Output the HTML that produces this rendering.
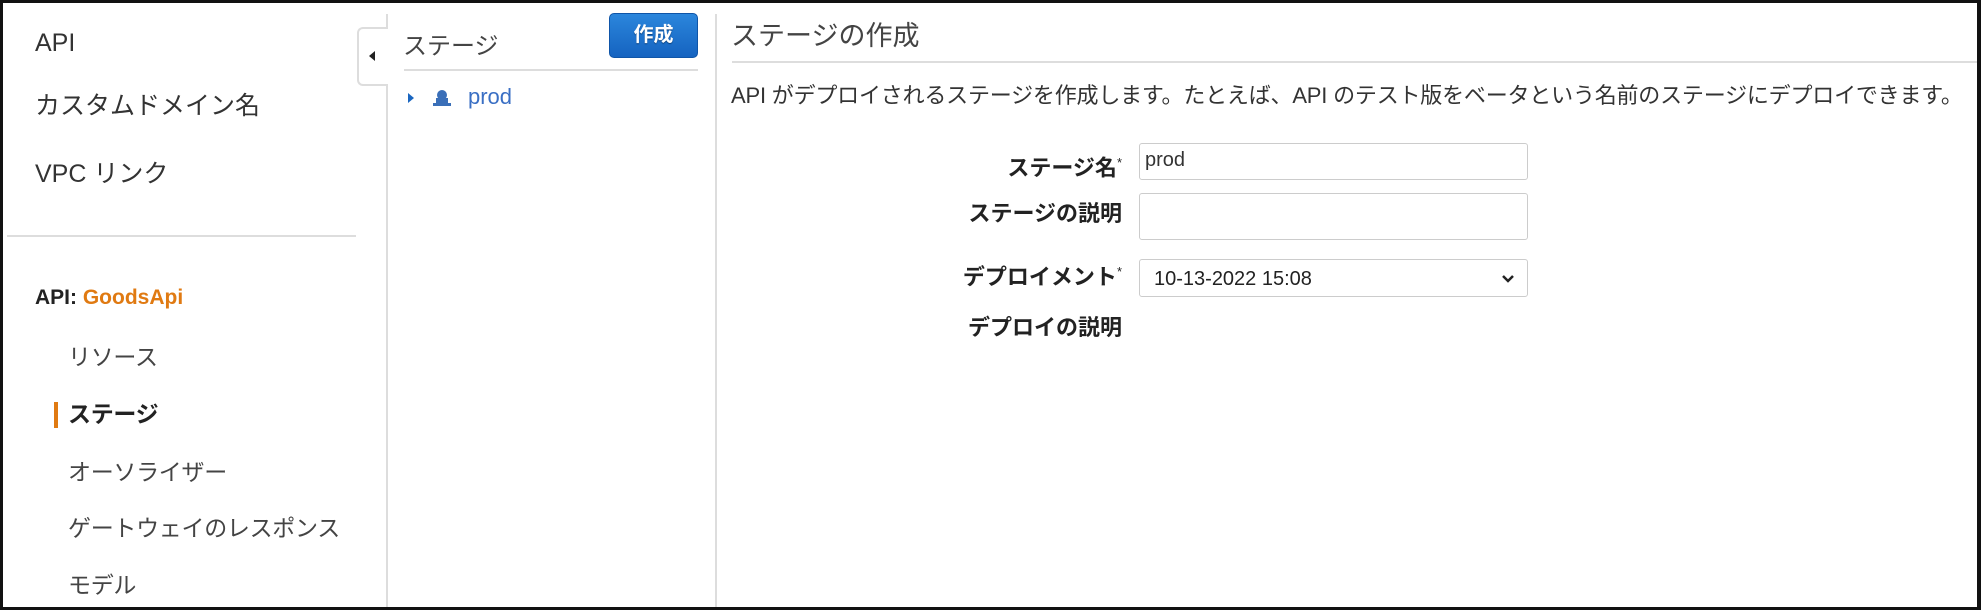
<!DOCTYPE html>
<html><head><meta charset="utf-8"><style>
*{margin:0;padding:0;box-sizing:border-box}
body{width:1981px;height:610px;overflow:hidden;background:#fff;font-family:"Liberation Sans","Noto Sans CJK JP",sans-serif;color:#333;position:relative}
.frame{position:absolute;left:0;top:0;width:1981px;height:610px;border:3px solid #111;border-right-width:4px}
.a{position:absolute;white-space:nowrap}
.l{font-size:25px;color:#333;left:35px;line-height:30px}
.s{font-size:23px;color:#444;left:68px;line-height:28px;letter-spacing:-0.3px}
.lab{font-size:22px;font-weight:bold;color:#222;right:859px;line-height:26px}
.inp{position:absolute;left:1139px;width:389px;border:1px solid #ccc;border-radius:3px;background:#fff}
</style></head><body>
<div class="a l" style="top:28px">API</div>
<div class="a l" style="top:91px">カスタムドメイン名</div>
<div class="a l" style="top:159px">VPC リンク</div>
<div class="a" style="left:7px;top:235px;width:349px;height:2px;background:#ddd"></div>
<div class="a" style="left:35px;top:286px;font-size:21px;font-weight:bold;color:#222">API: <span style="color:#e07a12">GoodsApi</span></div>
<div class="a s" style="top:343px">リソース</div>
<div class="a" style="left:54px;top:402px;width:4px;height:26px;background:#e07a12"></div>
<div class="a s" style="top:400px;font-weight:bold;color:#222">ステージ</div>
<div class="a s" style="top:458px">オーソライザー</div>
<div class="a s" style="top:514px">ゲートウェイのレスポンス</div>
<div class="a s" style="top:571px">モデル</div>
<div class="a" style="left:386px;top:14px;width:2px;height:596px;background:#ddd"></div>
<div class="a" style="left:357px;top:27px;width:31px;height:59px;border:2px solid #ddd;border-right:none;border-radius:6px 0 0 6px;background:#fff"></div>
<div class="a" style="left:369px;top:51px;width:0;height:0;border-top:5px solid transparent;border-bottom:5px solid transparent;border-right:6px solid #222"></div>
<div class="a" style="left:403px;top:26px;font-size:24px;color:#444">ステージ</div>
<div class="a" style="left:609px;top:13px;width:89px;height:45px;border-radius:5px;background:linear-gradient(#2b86dc,#1563c0);border:1px solid #0f55a8;color:#fff;font-weight:bold;font-size:20px;text-align:center;line-height:43px;text-shadow:0 1px 1px #0b3f7a">作成</div>
<div class="a" style="left:404px;top:69px;width:294px;height:2px;background:#ddd"></div>
<div class="a" style="left:408px;top:93px;width:0;height:0;border-top:5px solid transparent;border-bottom:5px solid transparent;border-left:6px solid #1a66c0"></div>
<svg class="a" style="left:432px;top:89px" width="20" height="18" viewBox="0 0 20 18"><circle cx="10" cy="6" r="5" fill="#3a6fb8"/><rect x="4" y="9" width="12" height="5" fill="#3a6fb8"/><rect x="1" y="14" width="18" height="3" fill="#3a6fb8"/></svg>
<div class="a" style="left:468px;top:84px;font-size:22px;color:#3a6fc4">prod</div>
<div class="a" style="left:715px;top:14px;width:2px;height:596px;background:#ddd"></div>
<div class="a" style="left:731px;top:14px;font-size:27px;color:#444">ステージの作成</div>
<div class="a" style="left:732px;top:61px;width:1245px;height:2px;background:#ddd"></div>
<div class="a" style="left:731px;top:78px;font-size:22px;color:#333;letter-spacing:-0.2px">API がデプロイされるステージを作成します。たとえば、API のテスト版をベータという名前のステージにデプロイできます。</div>
<div class="a lab" style="top:150px">ステージ名<sup style="font-size:13px;font-weight:normal">*</sup></div>
<div class="a lab" style="top:201px">ステージの説明</div>
<div class="a lab" style="top:259px">デプロイメント<sup style="font-size:13px;font-weight:normal">*</sup></div>
<div class="a lab" style="top:315px">デプロイの説明</div>
<div class="inp" style="top:143px;height:37px;font-size:20px;line-height:33px;padding-left:5px;color:#333">prod</div>
<div class="inp" style="top:193px;height:47px"></div>
<div class="inp" style="top:259px;height:38px;font-size:20px;line-height:38px;padding-left:14px;color:#222">10-13-2022 15:08
<svg style="position:absolute;right:12px;top:14px" width="14" height="10" viewBox="0 0 14 10"><path d="M2 2l5 5 5-5" stroke="#222" stroke-width="2.5" fill="none"/></svg></div>
<div class="frame"></div>
</body></html>
